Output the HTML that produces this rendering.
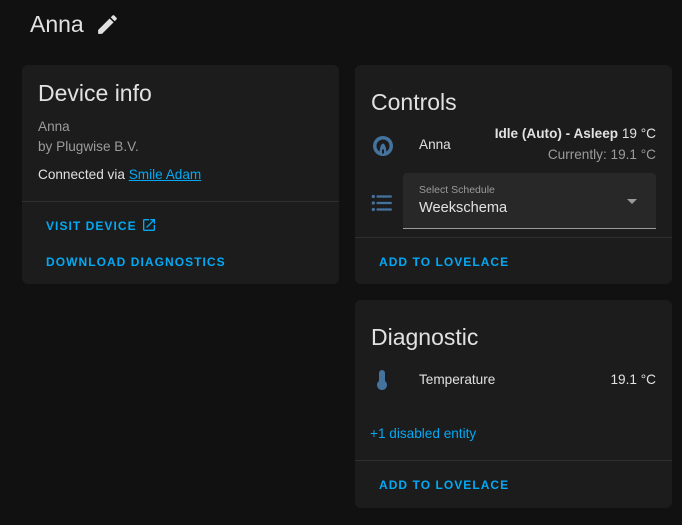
<!DOCTYPE html>
<html><head><style>
*{margin:0;padding:0;box-sizing:border-box}
body{width:682px;height:525px;background:#111111;font-family:"Liberation Sans",sans-serif;color:#e1e1e1;position:relative;overflow:hidden}
.a{position:absolute;white-space:nowrap}
.card{position:absolute;background:#1c1c1c;border-radius:6px}
.h{font-size:23px;color:#e1e1e1}
.btn{font-size:12px;font-weight:bold;letter-spacing:1.05px;color:#03a9f4}
.sep{position:absolute;left:0;right:0;height:1px;background:#2f2f2f}
.t{font-size:13.6px}
</style></head><body>
<div class="a" style="left:30px;top:11px;font-size:23px;color:#e1e1e1">Anna</div>
<svg class="a" style="left:95px;top:12px" width="25" height="25" viewBox="0 0 24 24"><path fill="#e1e1e1" d="M20.71,7.04C21.1,6.65 21.1,6 20.71,5.63L18.37,3.29C18,2.9 17.35,2.9 16.96,3.29L15.12,5.12L18.87,8.87M3,17.25V21H6.75L17.81,9.93L14.06,6.18L3,17.25Z"/></svg>

<div class="card" style="left:22px;top:65px;width:317px;height:219px">
  <div class="a h" style="left:16px;top:15px">Device info</div>
  <div class="a t" style="left:16px;top:54px;color:#9b9b9b">Anna</div>
  <div class="a t" style="left:16px;top:74px;color:#9b9b9b">by Plugwise B.V.</div>
  <div class="a t" style="left:16px;top:102px;color:#e1e1e1">Connected via <span style="color:#03a9f4;text-decoration:underline">Smile Adam</span></div>
  <div class="sep" style="top:136px"></div>
  <div class="a btn" style="left:24px;top:154px">VISIT DEVICE</div>
  <svg class="a" style="left:119px;top:152px" width="16" height="16" viewBox="0 0 24 24"><path fill="#03a9f4" d="M14,3V5H17.59L7.76,14.83L9.17,16.24L19,6.41V10H21V3M19,19H5V5H12V3H5C3.89,3 3,3.9 3,5V19A2,2 0 0,0 5,21H19A2,2 0 0,0 21,19V12H19V19Z"/></svg>
  <div class="a btn" style="left:24px;top:190px">DOWNLOAD DIAGNOSTICS</div>
</div>

<div class="card" style="left:355px;top:65px;width:317px;height:219px">
  <div class="a h" style="left:16px;top:24px">Controls</div>
  <svg class="a" style="left:16px;top:69px" width="24" height="24" viewBox="0 0 24 24"><circle cx="12" cy="12" r="10" fill="#44739e"/><circle cx="12" cy="12" r="6.5" fill="#1c1c1c"/><path d="M8.5 18.5 C9 13 10 10 12 9.5 C14 10 15 13 15.5 18.5Z" fill="#44739e"/><rect x="11" y="15.5" width="2" height="4" fill="#1c1c1c"/></svg>
  <div class="a t" style="left:64px;top:72px">Anna</div>
  <div class="a t" style="right:16px;top:61px;text-align:right"><b>Idle (Auto) - Asleep</b> 19 °C</div>
  <div class="a t" style="right:16px;top:82px;color:#9b9b9b">Currently: 19.1 °C</div>
  <svg class="a" style="left:14px;top:125px" width="26" height="26" viewBox="0 0 24 24"><path fill="#44739e" d="M7,5H21V7H7V5M7,13V11H21V13H7M4,4.5A1.5,1.5 0 0,1 5.5,6A1.5,1.5 0 0,1 4,7.5A1.5,1.5 0 0,1 2.5,6A1.5,1.5 0 0,1 4,4.5M4,10.5A1.5,1.5 0 0,1 5.5,12A1.5,1.5 0 0,1 4,13.5A1.5,1.5 0 0,1 2.5,12A1.5,1.5 0 0,1 4,10.5M7,19V17H21V19H7M4,16.5A1.5,1.5 0 0,1 5.5,18A1.5,1.5 0 0,1 4,19.5A1.5,1.5 0 0,1 2.5,18A1.5,1.5 0 0,1 4,16.5Z"/></svg>
  <div class="a" style="left:48px;top:108px;width:253px;height:56px;background:#282828;border-radius:4px 4px 0 0;border-bottom:1px solid #9b9b9b"></div>
  <div class="a" style="left:64px;top:119px;font-size:10.5px;color:#9b9b9b">Select Schedule</div>
  <div class="a" style="left:64px;top:135px;font-size:14.6px">Weekschema</div>
  <div class="a" style="left:272px;top:134px;width:0;height:0;border-left:5px solid transparent;border-right:5px solid transparent;border-top:5px solid #9b9b9b"></div>
  <div class="sep" style="top:172px"></div>
  <div class="a btn" style="left:24px;top:190px">ADD TO LOVELACE</div>
</div>

<div class="card" style="left:355px;top:300px;width:317px;height:208px">
  <div class="a h" style="left:16px;top:24px">Diagnostic</div>
  <svg class="a" style="left:15px;top:67px" width="24" height="26" viewBox="0 0 24 24"><path fill="#44739e" d="M15,13V5A3,3 0 0,0 9,5V13A5,5 0 1,0 15,13Z"/></svg>
  <div class="a t" style="left:64px;top:72px">Temperature</div>
  <div class="a t" style="right:16px;top:72px">19.1 °C</div>
  <div class="a t" style="left:15px;top:126px;color:#03a9f4">+1 disabled entity</div>
  <div class="sep" style="top:160px"></div>
  <div class="a btn" style="left:24px;top:178px">ADD TO LOVELACE</div>
</div>
</body></html>
